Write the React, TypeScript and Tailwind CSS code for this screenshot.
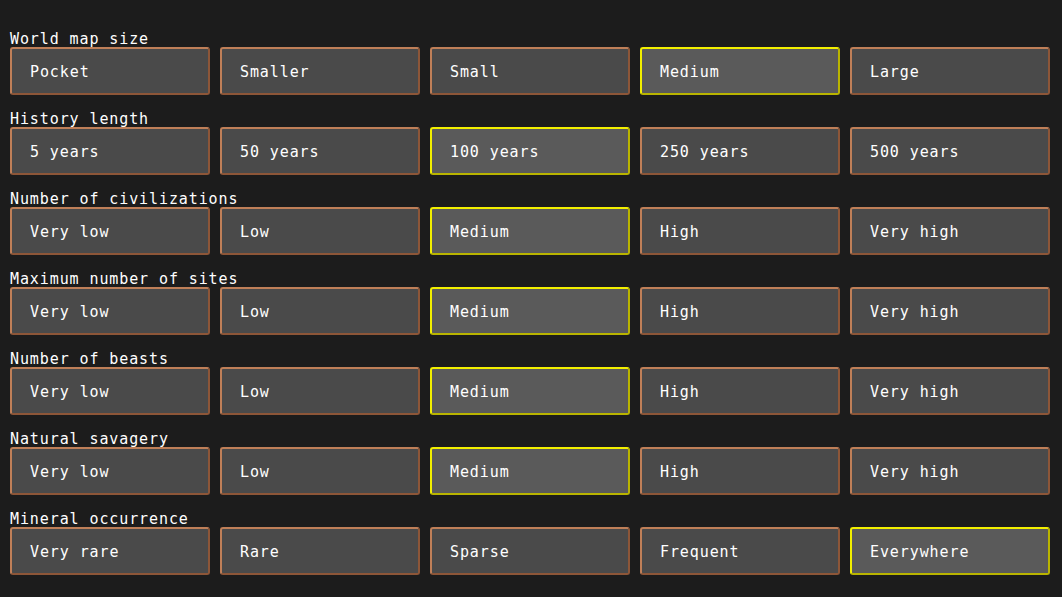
const groups: { label: string; options: string[]; selected: number }[] = [
  { label: 'World map size', options: ['Pocket', 'Smaller', 'Small', 'Medium', 'Large'], selected: 3 },
  { label: 'History length', options: ['5 years', '50 years', '100 years', '250 years', '500 years'], selected: 2 },
  { label: 'Number of civilizations', options: ['Very low', 'Low', 'Medium', 'High', 'Very high'], selected: 2 },
  { label: 'Maximum number of sites', options: ['Very low', 'Low', 'Medium', 'High', 'Very high'], selected: 2 },
  { label: 'Number of beasts', options: ['Very low', 'Low', 'Medium', 'High', 'Very high'], selected: 2 },
  { label: 'Natural savagery', options: ['Very low', 'Low', 'Medium', 'High', 'Very high'], selected: 2 },
  { label: 'Mineral occurrence', options: ['Very rare', 'Rare', 'Sparse', 'Frequent', 'Everywhere'], selected: 4 },
]

function Option({ text, active }: { text: string; active: boolean }) {
  return (
    <button
      className={
        active
          ? 'h-[48px] w-[200px] rounded-[3px] border-2 border-t-[#f2ef00] border-l-[#f2ef00] border-r-[#b9b400] border-b-[#b9b400] bg-[#5a5a5a] pl-[18px] pt-[2px] text-left text-white'
          : 'h-[48px] w-[200px] rounded-[3px] border-2 border-t-[#bf7f58] border-l-[#bf7f58] border-r-[#8d5638] border-b-[#8d5638] bg-[#4a4a4a] pl-[18px] pt-[2px] text-left text-white'
      }
    >
      {text}
    </button>
  )
}

export default function App() {
  return (
    <div
      className="min-h-[597px] w-[1062px] bg-[#1c1c1c] pl-[10px] pt-[31px] text-[15px] tracking-[0.9px]"
      style={{ fontFamily: '"DejaVu Sans Mono", "Liberation Mono", monospace' }}
    >
      <div className="flex flex-col gap-[16px]">
        {groups.map((g) => (
          <div key={g.label} className="flex flex-col">
            <div className="h-[16px] leading-[16px] text-white">{g.label}</div>
            <div className="flex gap-[10px]">
              {g.options.map((o, i) => (
                <Option key={o} text={o} active={i === g.selected} />
              ))}
            </div>
          </div>
        ))}
      </div>
    </div>
  )
}
